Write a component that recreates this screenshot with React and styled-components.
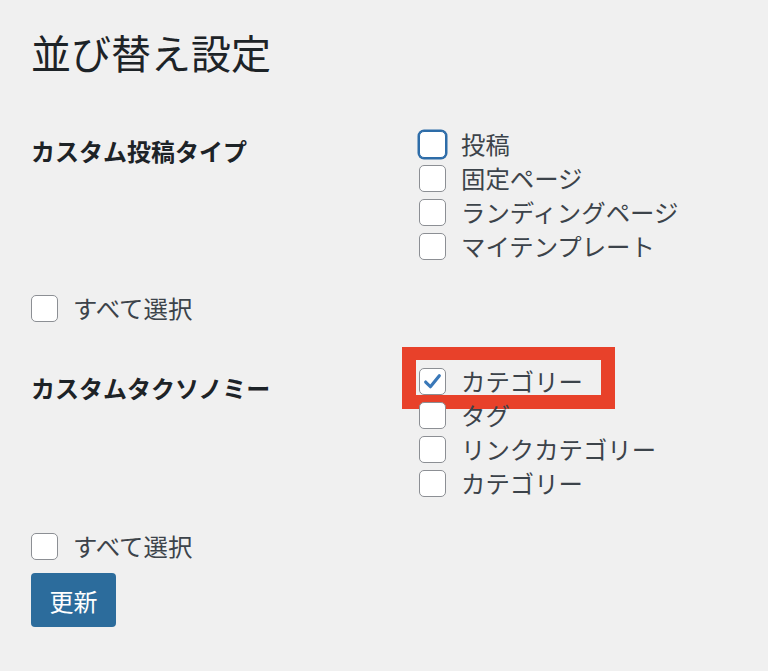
import React from 'react';
import styled, { createGlobalStyle } from 'styled-components';

const GlobalStyle = createGlobalStyle`
  html, body {
    margin: 0;
    padding: 0;
    background: #f0f0f0;
  }
  body {
    font-family: "Noto Sans CJK JP", "Noto Sans", sans-serif;
    color: #3c434a;
  }
`;

const Page = styled.div`
  padding: 26px 0 40px 31px;
  min-height: 671px;
  box-sizing: border-box;
`;

const Title = styled.h1`
  margin: 0;
  font-size: 40px;
  line-height: 52px;
  font-weight: 400;
  color: #1d2327;
`;

const Section = styled.div`
  display: grid;
  grid-template-columns: 388px 1fr;
  margin-top: ${(p) => p.$top}px;
`;

const Heading = styled.div`
  font-size: 24px;
  line-height: 34px;
  font-weight: 700;
  color: #1d2327;
  padding-top: ${(p) => p.$pad}px;
`;

const Options = styled.div`
  display: flex;
  flex-direction: column;
`;

const Row = styled.label`
  position: relative;
  display: flex;
  align-items: center;
  gap: 15px;
  height: 34px;
  font-size: 24.4px;
  line-height: 34px;
  color: #3c434a;
  margin-top: ${(p) => p.$top || 0}px;
`;

const Box = styled.span`
  flex: none;
  width: 27px;
  height: 27px;
  box-sizing: border-box;
  background: #fff;
  border: 1px solid ${(p) => (p.$focus ? '#2d6ca8' : '#8c8f94')};
  box-shadow: ${(p) => (p.$focus ? '0 0 0 1.5px #2d6ca8' : 'none')};
  border-radius: 5px;
  display: flex;
  align-items: center;
  justify-content: center;
`;

const Highlight = styled.span`
  position: absolute;
  left: -17px;
  top: -17px;
  width: 213px;
  height: 62px;
  box-sizing: border-box;
  border: 14px solid #e8412a;
  border-top-width: 13px;
  pointer-events: none;
`;

const Button = styled.button`
  margin-top: 10px;
  width: 85px;
  height: 54px;
  border: none;
  border-radius: 4px;
  background: #2c6c9c;
  color: #fff;
  font-family: "Noto Sans CJK JP", "Noto Sans", sans-serif;
  font-size: 24px;
  padding: 0;
  cursor: pointer;
`;

const Check = () => (
  <svg width="21" height="21" viewBox="0 0 20 20">
    <path
      d="M3.5 10.5 L8 15 L16.5 4.5"
      fill="none"
      stroke="#3a78b8"
      strokeWidth="3"
      strokeLinecap="round"
      strokeLinejoin="round"
    />
  </svg>
);

const Option = ({ label, checked, focus, highlight, top }) => (
  <Row $top={top}>
    <Box $focus={focus}>{checked && <Check />}</Box>
    {label}
    {highlight && <Highlight />}
  </Row>
);

export default function App() {
  return (
    <>
      <GlobalStyle />
      <Page>
        <Title>並び替え設定</Title>

        <Section $top={49}>
          <Heading $pad={7}>カスタム投稿タイプ</Heading>
          <Options>
            <Option label="投稿" focus />
            <Option label="固定ページ" />
            <Option label="ランディングページ" />
            <Option label="マイテンプレート" />
          </Options>
        </Section>
        <Option label="すべて選択" top={28} />

        <Section $top={39}>
          <Heading $pad={7}>カスタムタクソノミー</Heading>
          <Options>
            <Option label="カテゴリー" checked highlight />
            <Option label="タグ" />
            <Option label="リンクカテゴリー" />
            <Option label="カテゴリー" />
          </Options>
        </Section>
        <Option label="すべて選択" top={29} />

        <Button>更新</Button>
      </Page>
    </>
  );
}
